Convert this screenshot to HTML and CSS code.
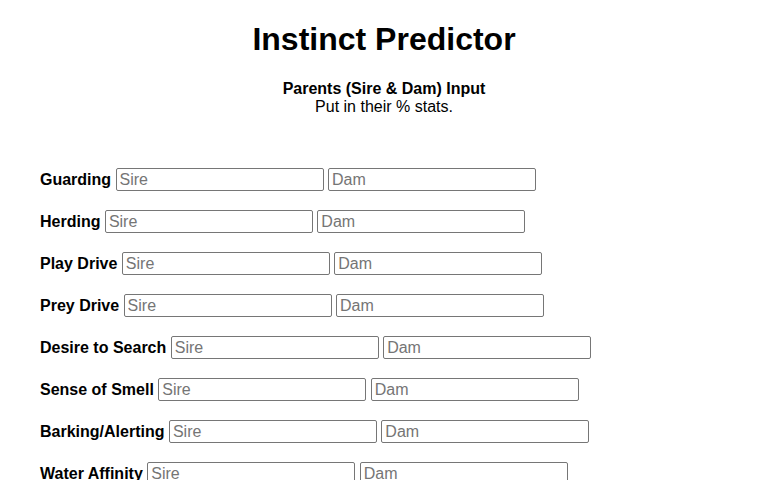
FILE: index.html
```html
<!DOCTYPE html>
<html lang="en">
<head>
    <meta charset="UTF-8">
    <meta name="viewport" content="width=device-width, initial-scale=1.0">
    <title>Instinct Predictor</title>
    <link rel="stylesheet" href="styles.css">
</head>
<body>
    <h1>Instinct Predictor</h1>
    <p class="intro">
        <b>Parents (Sire &amp; Dam) Input</b><br>
        Put in their % stats.
    </p>

    <form class="stats">
        <div class="stat-row">
            <label for="guardSire">Guarding</label>
            <input type="text" id="guardSire" placeholder="Sire">
            <input type="text" id="guardDam" placeholder="Dam">
        </div>
        <div class="stat-row">
            <label for="herdSire">Herding</label>
            <input type="text" id="herdSire" placeholder="Sire">
            <input type="text" id="herdDam" placeholder="Dam">
        </div>
        <div class="stat-row">
            <label for="playSire">Play Drive</label>
            <input type="text" id="playSire" placeholder="Sire">
            <input type="text" id="playDam" placeholder="Dam">
        </div>
        <div class="stat-row">
            <label for="preySire">Prey Drive</label>
            <input type="text" id="preySire" placeholder="Sire">
            <input type="text" id="preyDam" placeholder="Dam">
        </div>
        <div class="stat-row">
            <label for="searchSire">Desire to Search</label>
            <input type="text" id="searchSire" placeholder="Sire">
            <input type="text" id="searchDam" placeholder="Dam">
        </div>
        <div class="stat-row">
            <label for="smellSire">Sense of Smell</label>
            <input type="text" id="smellSire" placeholder="Sire">
            <input type="text" id="smellDam" placeholder="Dam">
        </div>
        <div class="stat-row">
            <label for="barkSire">Barking/Alerting</label>
            <input type="text" id="barkSire" placeholder="Sire">
            <input type="text" id="barkDam" placeholder="Dam">
        </div>
        <div class="stat-row">
            <label for="waterSire">Water Affinity</label>
            <input type="text" id="waterSire" placeholder="Sire">
            <input type="text" id="waterDam" placeholder="Dam">
        </div>
    </form>
</body>
</html>
```

FILE: styles.css
```css
body {
    font-family: "Liberation Sans", Arial, sans-serif;
    font-size: 16px;
    color: black;
    background: white;
    margin: 0;
}
h1 {
    text-align: center;
    font-size: 32px;
    margin: 21px 0 22px;
}
.intro {
    text-align: center;
    margin: 0;
    line-height: 18px;
}
.stats {
    margin-top: 52px;
    padding-left: 40px;
}
.stat-row {
    display: flex;
    align-items: center;
    gap: 4.45px;
    height: 23px;
    margin-bottom: 19px;
}
.stat-row label {
    font-weight: bold;
}
.stat-row input {
    box-sizing: border-box;
    width: 208px;
    height: 23px;
    font-family: "Liberation Sans", Arial, sans-serif;
    font-size: 16px;
    padding: 1px 3px;
    border: 1px solid #767676;
    border-radius: 2px;
    margin: 0;
}
.stat-row input::placeholder {
    color: #757575;
}
```
